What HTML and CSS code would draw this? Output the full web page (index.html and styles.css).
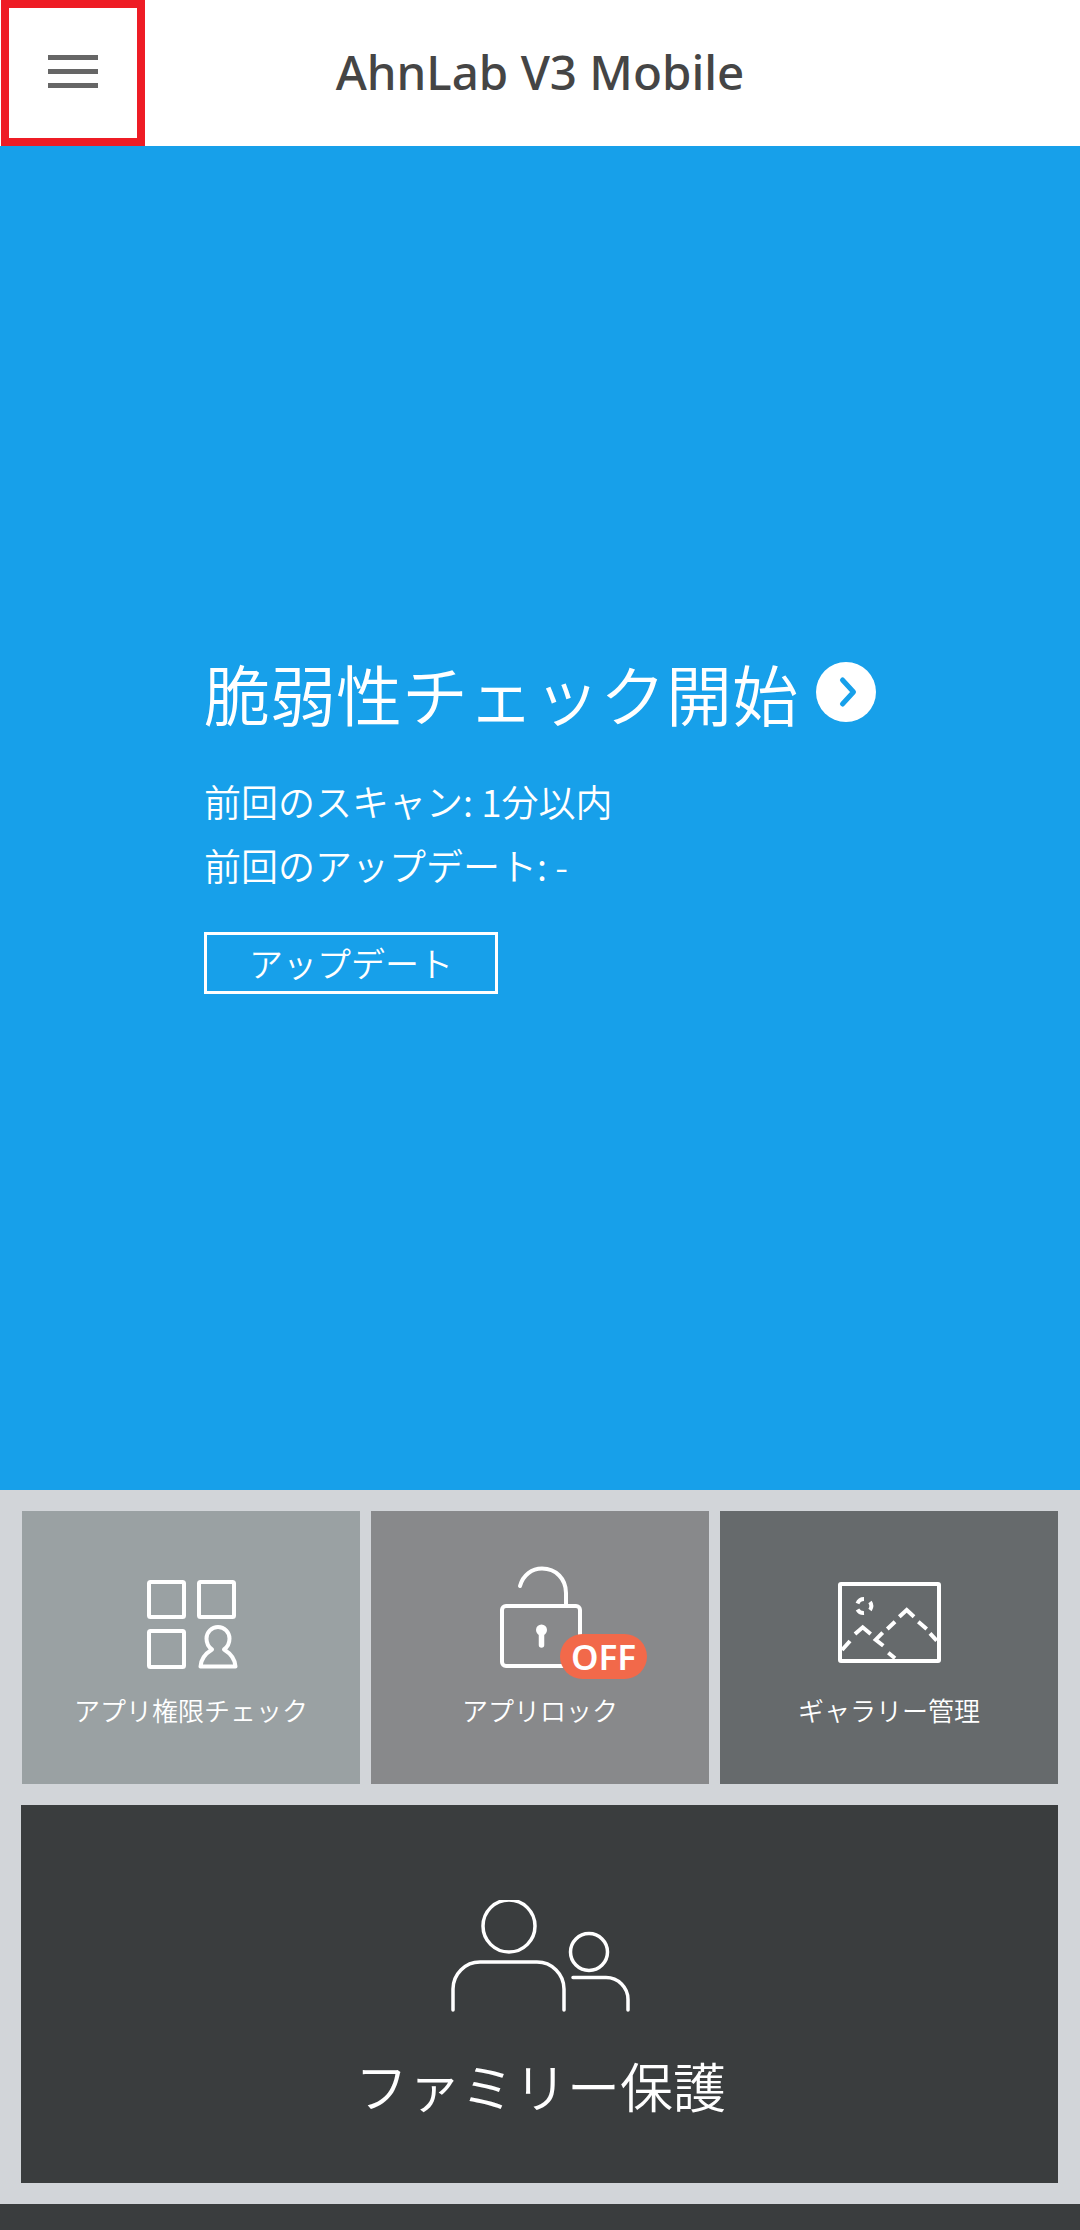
FILE: index.html
```html
<!DOCTYPE html>
<html lang="ja">
<head>
    <meta charset="UTF-8">
    <meta name="viewport" content="width=device-width, initial-scale=1.0">
    <title>AhnLab V3 Mobile</title>
    <link rel="stylesheet" href="styles.css">
</head>
<body>
    <header class="app-header">
        <button class="menu-button" type="button" aria-label="menu">
            <span class="menu-bar"></span>
            <span class="menu-bar"></span>
            <span class="menu-bar"></span>
        </button>
        <div class="logo">AhnLab V3 Mobile</div>
    </header>

    <section class="hero">
        <div class="hero-title">
            <h1>脆弱性チェック開始</h1>
            <svg class="go-icon" viewBox="0 0 60 60" width="60" height="60">
                <circle cx="30" cy="30" r="30" fill="#fff"/>
                <path d="M26.5 18 37.5 30 26.5 42" fill="none" stroke="#17a0ea" stroke-width="5" stroke-linecap="round" stroke-linejoin="round"/>
            </svg>
        </div>
        <p class="hero-line">前回のスキャン: 1分以内</p>
        <p class="hero-line">前回のアップデート: -</p>
        <button class="update-button" type="button">アップデート</button>
    </section>

    <section class="menu-grid">
        <div class="tile tile-permission">
            <div class="tile-icon">
                <svg viewBox="0 0 160 120" width="160" height="120" fill="none" stroke="#fff" stroke-width="4" stroke-linejoin="round">
                    <rect x="38" y="22" width="35" height="35" rx="1.5"/>
                    <rect x="88" y="22" width="35" height="35" rx="1.5"/>
                    <rect x="38" y="71" width="35" height="36" rx="1.5"/>
                    <path d="M89.5 106.5h35c-.5-8-5-13-11.5-17 3.5-2.5 5.5-6.5 5.5-11a11.5 11.5 0 0 0-23 0c0 4.5 2 8.5 5.5 11-6.500 4-11 9-11.500 17z"/>
                </svg>
            </div>
            <span class="tile-label">アプリ権限チェック</span>
        </div>
        <div class="tile tile-lock">
            <div class="tile-icon">
                <svg viewBox="0 0 160 120" width="160" height="120" fill="none" stroke="#fff" stroke-width="4" stroke-linecap="round" stroke-linejoin="round">
                    <rect x="42" y="46" width="78" height="60" rx="4"/>
                    <path d="M60 26C63 15 72 8.500 82 8.500C96 8.500 106 19 106 33V46"/>
                    <circle cx="81.500" cy="70" r="5.500" fill="#fff" stroke="none"/>
                    <path d="M81.500 70V85" stroke-width="5.500"/>
                </svg>
                <span class="off-badge">OFF</span>
            </div>
            <span class="tile-label">アプリロック</span>
        </div>
        <div class="tile tile-gallery">
            <div class="tile-icon">
                <svg viewBox="0 0 160 120" width="160" height="120" fill="none" stroke="#fff" stroke-width="4" stroke-linejoin="miter">
                    <rect x="31" y="24" width="99" height="77" rx="1"/>
                    <path d="M33 90 41 81M46 74 53.700 67.300 61.700 74M73.700 72.700 66.700 79.700 74.300 85.700M79.300 92.700 86 98.300M78.300 69 86 61.700M90.300 56.700 97.700 50 105 56.700M109.300 61.700 117.700 69M121 73.300 127.700 80.700"/>
                    <path d="M48.500 43.500A7 7 0 0 1 55 39M48.500 49.500A7 7 0 0 0 55 53M61 42A7 7 0 0 1 61 50"/>
                </svg>
            </div>
            <span class="tile-label">ギャラリー管理</span>
        </div>
        <div class="tile-family">
            <svg viewBox="0 0 200 115" width="200" height="115" fill="none" stroke="#fff" stroke-width="3.500" stroke-linecap="round">
                <circle cx="69" cy="26" r="26"/>
                <path d="M13 110V89A27 27 0 0 1 40 62H97A27 27 0 0 1 124 89V110"/>
                <circle cx="149" cy="52" r="18.500"/>
                <path d="M133 77.500H166A22 22 0 0 1 188 99.500V110"/>
            </svg>
            <span class="family-label">ファミリー保護</span>
        </div>
    </section>

    <div class="bottom-bar"></div>
</body>
</html>
```

FILE: styles.css
```css
html,
body {
    margin: 0;
    padding: 0;
}

body {
    width: 1080px;
    height: 2230px;
    overflow: hidden;
    font-family: "Noto Sans CJK JP", "Noto Sans", sans-serif;
    font-weight: 350;
    color: #ffffff;
    background-color: #3a3d3e;
}

.app-header {
    display: grid;
    grid-template-columns: 146px 1fr 146px;
    align-items: center;
    height: 146px;
    background-color: #ffffff;
}

.menu-button {
    display: flex;
    flex-direction: column;
    align-items: center;
    justify-content: center;
    gap: 9px;
    width: 144px;
    height: 146px;
    margin: 0 0 0 1px;
    padding: 0 0 4px;
    border: 8px solid #ee1c25;
    box-sizing: border-box;
    background: #ffffff;
}

.menu-bar {
    display: block;
    width: 50px;
    height: 5px;
    background-color: #666666;
}

.logo {
    text-align: center;
    font-family: "Noto Sans", sans-serif;
    font-size: 47.500px;
    font-weight: 500;
    line-height: 54px;
    color: #454545;
    padding-bottom: 2px;
}

.hero {
    display: flex;
    flex-direction: column;
    align-items: flex-start;
    justify-content: center;
    height: 1344px;
    padding: 9px 0 0 204px;
    box-sizing: border-box;
    background-color: #17a0ea;
}

.hero-title {
    display: flex;
    align-items: center;
    gap: 18px;
    margin-bottom: 42px;
}

.hero-title h1 {
    margin: 0;
    font-size: 66px;
    font-weight: 350;
    line-height: 80px;
}

.go-icon {
    display: block;
}

.hero-line {
    margin: 0 0 10px;
    font-size: 37px;
    line-height: 54px;
}

.update-button {
    width: 294px;
    height: 62px;
    margin-top: 30px;
    padding: 0;
    border: 3px solid #ffffff;
    box-sizing: border-box;
    background: transparent;
    color: #ffffff;
    font-family: inherit;
    font-size: 34px;
    font-weight: 350;
}

.menu-grid {
    display: grid;
    grid-template-columns: 338px 338px 338px;
    grid-template-rows: 273px 378px;
    gap: 21px 11px;
    height: 714px;
    padding: 21px 21px 0 22px;
    box-sizing: border-box;
    background-color: #d2d5d9;
}

.tile {
    display: flex;
    flex-direction: column;
    align-items: center;
    padding-top: 49px;
    box-sizing: border-box;
}

.tile-permission {
    background-color: #9aa1a3;
}

.tile-lock {
    background-color: #88898b;
}

.tile-gallery {
    background-color: #666a6c;
}

.tile-icon {
    position: relative;
    width: 160px;
    height: 120px;
}

.tile-icon svg {
    display: block;
}

.off-badge {
    position: absolute;
    left: 100px;
    top: 74px;
    width: 87px;
    height: 45px;
    border-radius: 23px;
    background-color: #f2694a;
    font-family: "Noto Sans", sans-serif;
    font-size: 35px;
    font-weight: 600;
    line-height: 45px;
    text-align: center;
}

.tile-label {
    margin-top: 13px;
    font-size: 26px;
    line-height: 34px;
}

.tile-family {
    grid-column: 1 / 4;
    display: flex;
    flex-direction: column;
    align-items: center;
    margin-left: -1px;
    padding-top: 95px;
    box-sizing: border-box;
    background-color: #3a3d3e;
}

.tile-family svg {
    display: block;
}

.family-label {
    margin: 40px 0 0 2px;
    font-size: 53px;
    line-height: 60px;
}

.bottom-bar {
    height: 26px;
    background-color: #3a3d3e;
}
```
